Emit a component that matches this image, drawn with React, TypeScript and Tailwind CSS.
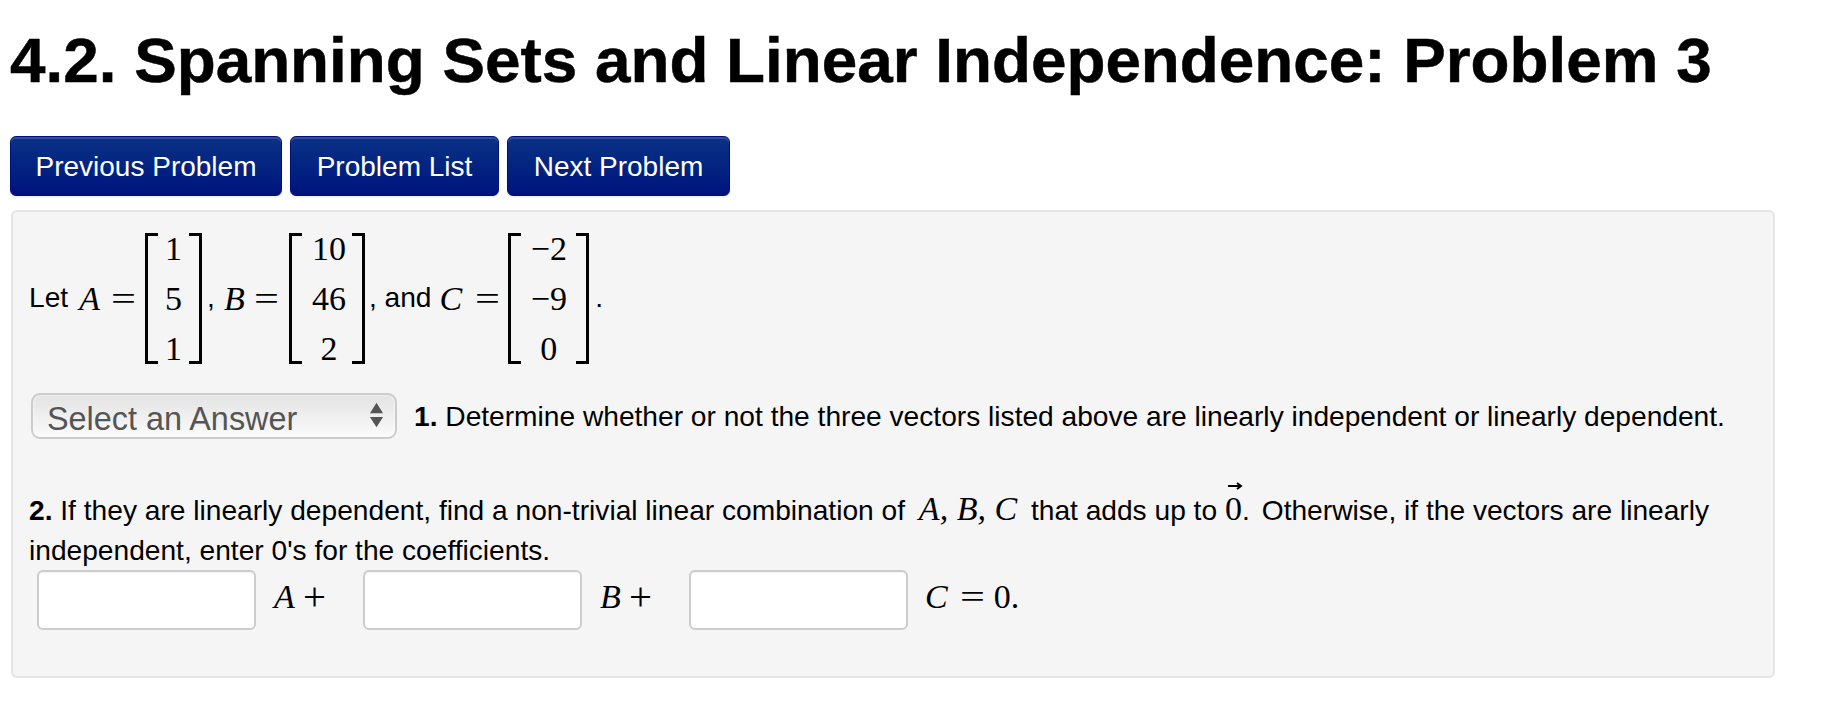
const sans = "font-['Liberation_Sans',Arial,sans-serif]";
const serif = "font-['Liberation_Serif','Times_New_Roman',serif]";

function NavButton({ label, width }: { label: string; width: string }) {
  return (
    <a
      className={`${width} flex h-[60px] items-center justify-center rounded-[6px] border border-[#00127a] bg-gradient-to-b from-[#0c3185] to-[#00127d] pt-[2px] text-[28px] text-white shadow-[inset_0_2px_0_rgba(255,255,255,0.15),0_1px_2px_rgba(0,0,0,0.1)]`}
    >
      {label}
    </a>
  );
}

function Matrix({ rows, width }: { rows: string[]; width: string }) {
  return (
    <span className={`${serif} flex h-[131px] items-stretch text-[34px] text-black`}>
      <span className="w-[13px] border-y-[3px] border-l-[3px] border-black" />
      <span className={`${width} flex flex-col justify-center`}>
        {rows.map((r, i) => (
          <span key={i} className="h-[50px] text-center leading-[50px]">
            {r}
          </span>
        ))}
      </span>
      <span className="w-[13px] border-y-[3px] border-r-[3px] border-black" />
    </span>
  );
}

function Coef() {
  return (
    <input
      type="text"
      className="h-[60px] w-[219px] rounded-[6px] border-2 border-[#cccccc] bg-white shadow-[inset_0_1px_1px_rgba(0,0,0,0.05)]"
    />
  );
}

function M({ children, className = "" }: { children: React.ReactNode; className?: string }) {
  return <span className={`${serif} text-[34px] ${className}`}>{children}</span>;
}

function Eq({ className = "" }: { className?: string }) {
  return <span className={`${serif} inline-block scale-x-[1.3] text-[34px] ${className}`}>=</span>;
}

function Plus() {
  return <span className={`${serif} mb-[7px] ml-[10px] inline-block scale-[1.2] text-[34px]`}>+</span>;
}

export default function App() {
  return (
    <div className={`${sans} min-h-[712px] bg-white text-black`}>
      <h1 className="pt-[18px] pl-[10px] text-[63.8px] font-bold leading-[84px] [-webkit-text-stroke:0.5px_black]">
        4.2. Spanning Sets and Linear Independence: Problem 3
      </h1>
      <div className="mt-[34px] ml-[10px] flex gap-[8px]">
        <NavButton label="Previous Problem" width="w-[272px]" />
        <NavButton label="Problem List" width="w-[209px]" />
        <NavButton label="Next Problem" width="w-[223px]" />
      </div>

      <div className="mt-[14px] ml-[11px] h-[468px] w-[1764px] rounded-[6px] border-2 border-[#e5e5e5] bg-[#f5f5f5] pt-[21px] pl-[16px] text-[28.15px]">
        <div className="flex items-center">
          <span>Let</span>
          <M className="ml-[11px] italic">A</M>
          <Eq className="mr-[12px] ml-[14px]" />
          <Matrix rows={["1", "5", "1"]} width="w-[31px]" />
          <span className="ml-[5px]">,</span>
          <M className="ml-[9px] italic">B</M>
          <Eq className="mr-[13px] ml-[12px]" />
          <Matrix rows={["10", "46", "2"]} width="w-[50px] pl-[4px]" />
          <span className="ml-[4px]">, and</span>
          <M className="ml-[8px] italic">C</M>
          <Eq className="mr-[11px] ml-[16px]" />
          <Matrix rows={["−2", "−9", "0"]} width="w-[55px]" />
          <span className="ml-[6px]">.</span>
        </div>

        <div className="mt-[29px] ml-[2px] flex items-center">
          <div className="relative h-[46px] w-[366px]">
            <select className="h-full w-full appearance-none rounded-[9px] border-2 border-[#cccccc] bg-gradient-to-b from-[#e3e3e3] to-[#fbfbfb] pb-[4px] pl-[14px] text-[32.4px] text-[#555555] shadow-[inset_0_0_3px_rgba(255,255,255,0.9)]">
              <option>Select an Answer</option>
            </select>
            <svg className="absolute top-[8px] right-[13px] h-[28px] w-[15px]" viewBox="0 0 16 28">
              <path d="M8 1 L15 12 L1 12 Z M1 16 L15 16 L8 27 Z" fill="#555555" />
            </svg>
          </div>
          <span className="ml-[17px] pt-[2px]">
            <b>1.</b> Determine whether or not the three vectors listed above are linearly independent or linearly dependent.
          </span>
        </div>

        <div className="mt-[50px] leading-[40px]">
          <b>2.</b> If they are linearly dependent, find a non-trivial linear combination of{" "}
          <M className="ml-[6px] italic">A, B, C</M> <span className="ml-[6px]">that adds up to</span>{" "}
          <span className="relative">
            <M>0</M>
            <svg className="absolute -top-[14px] left-[2px] h-[10px] w-[16px]" viewBox="0 0 16 10">
              <path d="M1 5 H13 M10 2 L14 5 L10 8" fill="none" stroke="#000" strokeWidth="2" />
            </svg>
          </span>
          .<span className="ml-[12px]">Otherwise, if the vectors are linearly</span>
        </div>
        <div className="leading-[40px]">independent, enter 0's for the coefficients.</div>

        <div className="-mt-px ml-[8px] flex items-center">
          <Coef />
          <M className="mb-[7px] ml-[18px] italic">A</M>
          <Plus />
          <div className="ml-[39px]">
            <Coef />
          </div>
          <M className="mb-[7px] ml-[18px] italic">B</M>
          <Plus />
          <div className="ml-[39px]">
            <Coef />
          </div>
          <M className="mb-[7px] ml-[17px] italic">C</M>
          <Eq className="mb-[7px] ml-[15px]" />
          <M className="mb-[7px] ml-[12px]">0.</M>
        </div>
      </div>
    </div>
  );
}
